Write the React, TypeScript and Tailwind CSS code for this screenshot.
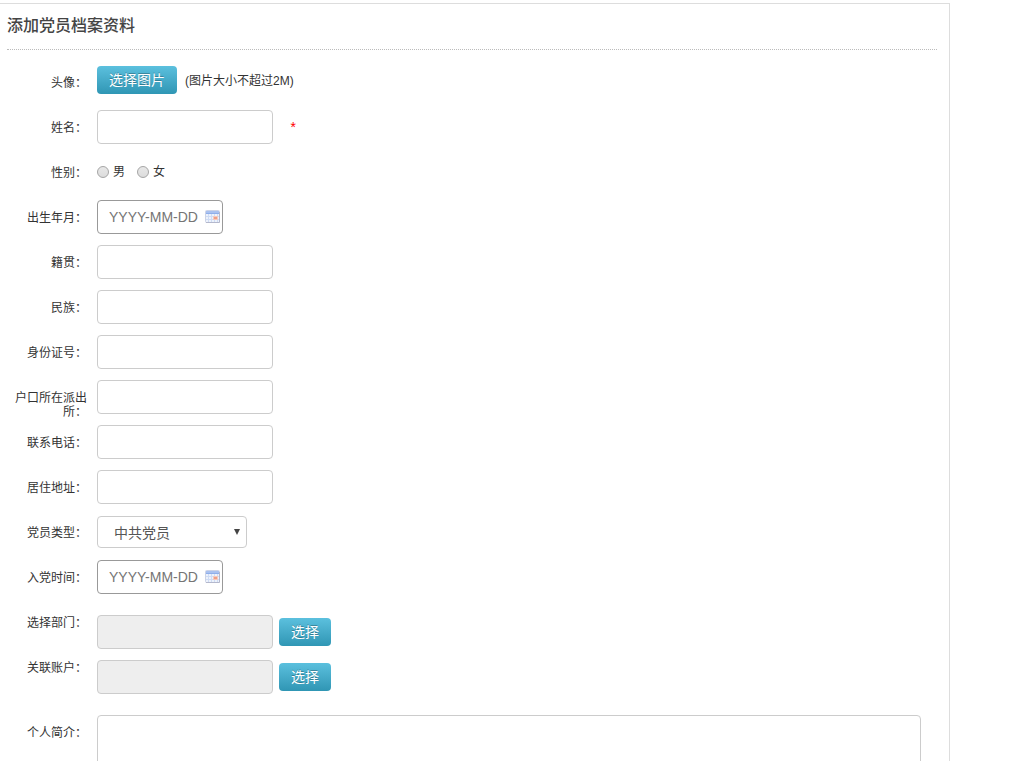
import React, { useState } from 'react';

const inputClass = 'h-[34px] w-44 rounded border border-[#cccccc] px-3 text-sm text-[#555555] focus:outline-none';
const buttonClass =
  'h-7 rounded bg-linear-to-b from-[#5bc0de] to-[#2f96b4] px-3 text-sm leading-5 text-white [text-shadow:0_-1px_0_rgba(0,0,0,0.25)]';

const Row: React.FC<{ label: string; id: string; className?: string; children: React.ReactNode }> = ({
  label,
  id,
  className = 'mb-[11px]',
  children,
}) => (
  <div className={`flex min-h-[34px] items-start gap-2.5 ${className}`}>
    <label htmlFor={id} className="-mb-2 w-20 shrink-0 pt-[11px] text-right leading-[14px]">
      {label}：
    </label>
    {children}
  </div>
);

const TextRow: React.FC<{ label: string; id: string; required?: boolean }> = ({ label, id, required }) => (
  <Row label={label} id={id}>
    <div className="flex items-center">
      <input id={id} type="text" required={required} className={inputClass} />
      {required && <span className="ml-4 pt-1 font-['Liberation_Mono'] text-sm leading-none text-[#ff0000]">*</span>}
    </div>
  </Row>
);

const CalendarIcon = () => (
  <svg
    width="16"
    height="14"
    viewBox="0 0 16 14"
    className="pointer-events-none absolute top-[10px] right-[2px]"
    aria-hidden="true"
  >
    <rect x="0.5" y="0.5" width="14" height="12" rx="1" fill="#edf2fb" stroke="#ccd3e6" />
    <path d="M1 1h13v3H1z" fill="#a9c1f0" />
    <path d="M1 3.5h13" stroke="#8eaeea" />
    <path d="M1 6.5h13M1 9.5h13M3.5 4v8M6.5 4v8M9.5 4v8M12.5 4v8" stroke="#cfdcf5" />
    <path d="M8 6h5v4H8z" fill="#f5c9bd" />
    <path d="M9 7h3v2H9z" fill="#ef9f86" />
    <path d="M1 12.5h13.5V2" fill="none" stroke="#b4b8cc" />
  </svg>
);

const DateRow: React.FC<{ label: string; id: string; className?: string }> = ({ label, id, className }) => (
  <Row label={label} id={id} className={className}>
    <div className="relative">
      <input
        id={id}
        type="text"
        placeholder="YYYY-MM-DD"
        className="h-[34px] w-[126px] rounded border border-[#999999] pr-5 pl-[11px] text-sm text-[#555555] placeholder:text-[#757575] focus:outline-none"
      />
      <CalendarIcon />
    </div>
  </Row>
);

const PickerRow: React.FC<{ label: string; id: string; className: string }> = ({ label, id, className }) => (
  <Row label={label} id={id} className={className}>
    <div className="flex items-center gap-1.5 pt-2.5">
      <input id={id} type="text" readOnly className={`${inputClass} bg-[#eeeeee]`} />
      <button type="button" className={buttonClass}>选择</button>
    </div>
  </Row>
);

export default function App() {
  const [gender, setGender] = useState('');
  const [type, setType] = useState('中共党员');

  return (
    <div
      lang="zh-CN"
      className="h-screen overflow-hidden bg-white pt-[3px] font-['Liberation_Sans','Noto_Sans_CJK_SC',sans-serif] text-xs text-[#333333]"
    >
      <form className="min-h-full w-full max-w-[950px] border-t border-r border-[#dddddd] pr-3 pl-[7px]">
        <h1 className="mb-[15px] border-b border-dotted border-[#bbbbbb] pt-2.5 pb-[11px] text-base font-medium text-[#444444]">
          添加党员档案资料
        </h1>

        <Row label="头像" id="avatar">
          <div className="flex items-center gap-2 pt-px">
            <button id="avatar" type="button" className={buttonClass}>选择图片</button>
            <span className="pt-0.5">(图片大小不超过2M)</span>
          </div>
        </Row>
        <TextRow label="姓名" id="name" required />
        <Row label="性别" id="male">
          <div className="flex gap-3 pt-2.5 leading-[14px]">
            {['男', '女'].map((value, i) => (
              <label key={value} className="flex items-center gap-1">
                <input
                  id={i === 0 ? 'male' : 'female'}
                  type="radio"
                  name="gender"
                  checked={gender === value}
                  onChange={() => setGender(value)}
                  className="size-3 appearance-none rounded-full border border-[#a5a5a5] bg-linear-to-b from-[#e8e8e8] to-[#dcdcdc] checked:border-4 checked:border-[#555555]"
                />
                {value}
              </label>
            ))}
          </div>
        </Row>
        <DateRow label="出生年月" id="birthday" />
        <TextRow label="籍贯" id="origin" />
        <TextRow label="民族" id="nation" />
        <TextRow label="身份证号" id="idcard" />
        <TextRow label="户口所在派出所" id="police" />
        <TextRow label="联系电话" id="phone" />
        <TextRow label="居住地址" id="address" />
        <Row label="党员类型" id="type">
          <div className="relative pt-px">
            <select
              id="type"
              value={type}
              onChange={e => setType(e.target.value)}
              className="h-8 w-[150px] appearance-none rounded border border-[#cccccc] bg-white pt-0.5 pl-4 text-sm text-[#555555] focus:outline-none"
            >
              <option>中共党员</option>
              <option>预备党员</option>
            </select>
            <svg
              width="6"
              height="6"
              viewBox="0 0 6 6"
              className="pointer-events-none absolute top-[14px] right-[7px]"
              aria-hidden="true"
            >
              <path d="M0 0h6L3 6z" fill="#444444" />
            </svg>
          </div>
        </Row>
        <DateRow label="入党时间" id="joined" />
        <PickerRow label="选择部门" id="department" className="mb-px" />
        <PickerRow label="关联账户" id="account" className="mb-[21px]" />
        <Row label="个人简介" id="profile">
          <textarea
            id="profile"
            className="mr-4 h-[200px] flex-1 resize-none rounded border border-[#cccccc] px-3 py-1.5 text-sm text-[#555555] focus:outline-none"
          />
        </Row>
      </form>
    </div>
  );
}
